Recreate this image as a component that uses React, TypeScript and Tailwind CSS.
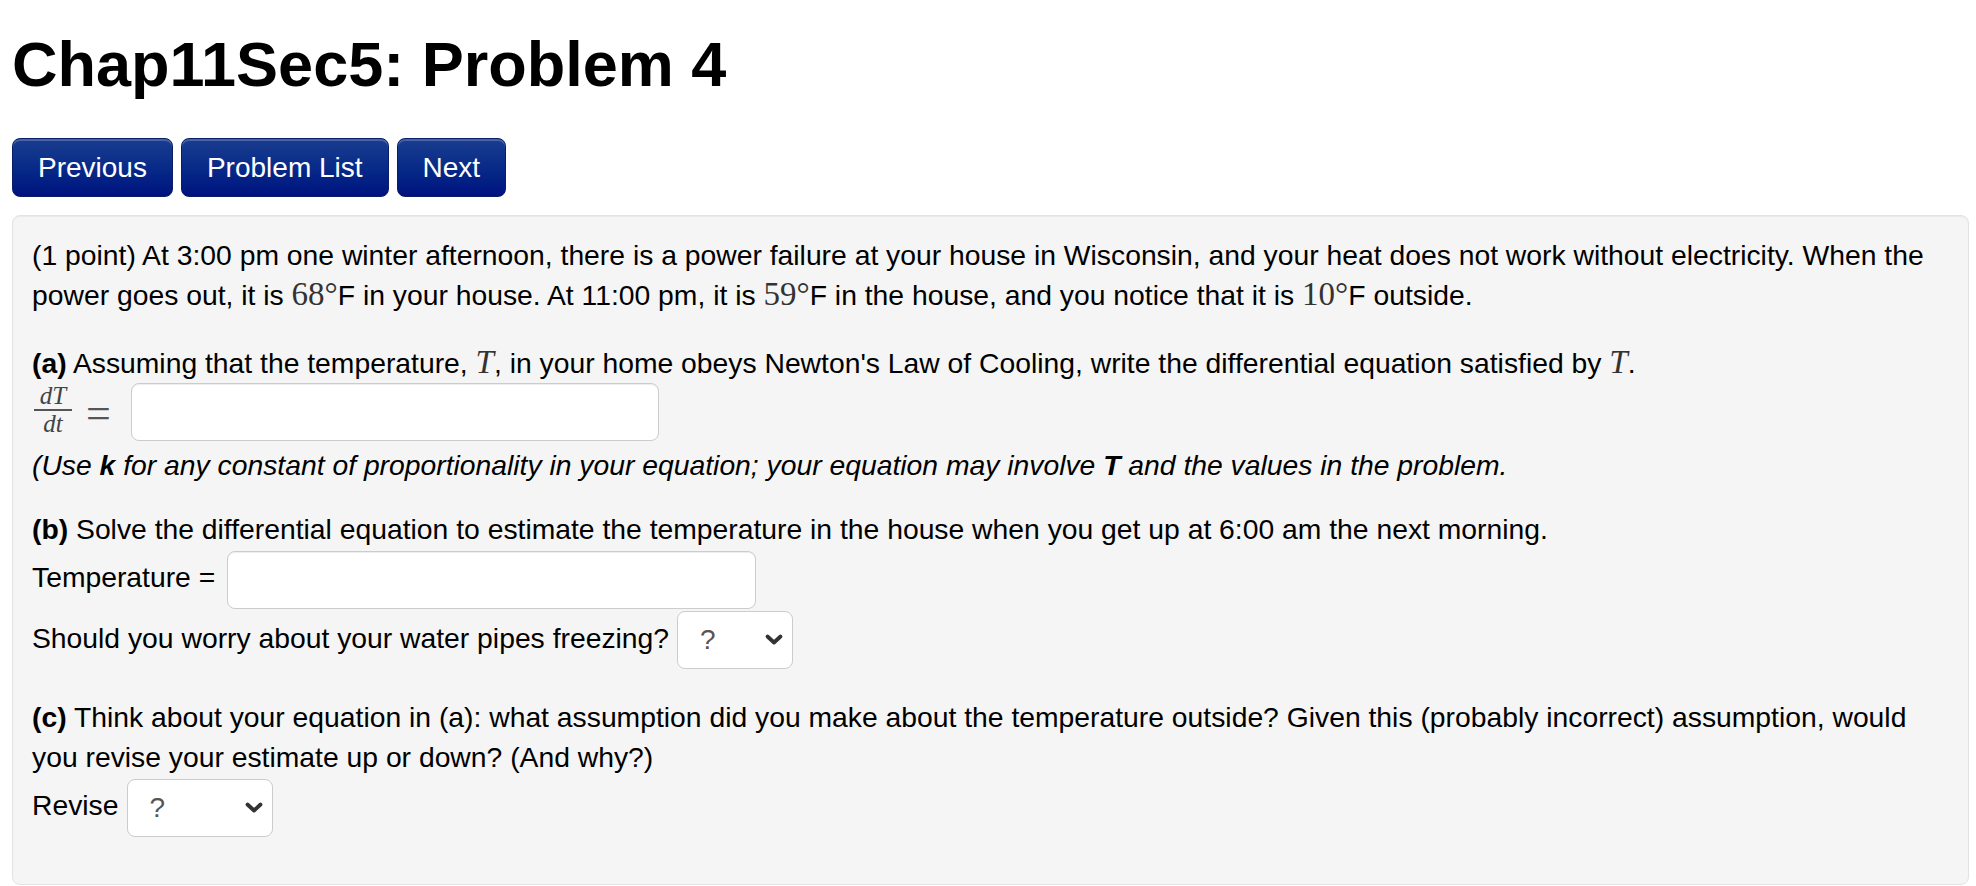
import React from 'react';

const sans = { fontFamily: '"Liberation Sans", Arial, Helvetica, sans-serif' };

function M({ children }: { children: React.ReactNode }) {
  return (
    <span className="font-['Liberation_Serif',serif] text-[33px] leading-none text-[#333]">{children}</span>
  );
}

function Deg({ n }: { n: string }) {
  return (
    <>
      <M>{n}°</M>F
    </>
  );
}

function TextBox({ width }: { width: string }) {
  return (
    <input
      type="text"
      className={`${width} h-[58px] rounded-[8px] border border-[#cccccc] bg-white px-3 text-[28px] shadow-[inset_0_1px_1px_rgba(0,0,0,0.075)] outline-none`}
    />
  );
}

function Pick({ width }: { width: string }) {
  return (
    <div className={`relative ${width} h-[58px]`}>
      <select className="h-full w-full appearance-none rounded-[8px] border border-[#cccccc] bg-white pl-[22px] text-[28px] text-[#555] outline-none">
        <option>?</option>
      </select>
      <svg
        className="pointer-events-none absolute right-[9px] top-[22px] h-[14px] w-[20px]"
        viewBox="0 0 20 14"
        fill="none"
        stroke="#333"
        strokeWidth="3.8"
        strokeLinecap="round"
        strokeLinejoin="round"
      >
        <path d="M3.5 3.5 L10 9.5 L16.5 3.5" />
      </svg>
    </div>
  );
}

export default function App() {
  return (
    <div className="min-h-[886px] bg-white pl-[12px] pr-[7px] text-black" style={sans}>
      <h1 className="pt-[29px] text-[63px] font-bold leading-[70px]">Chap11Sec5: Problem 4</h1>

      <div className="mt-[39px] flex gap-[8px]">
        {['Previous', 'Problem List', 'Next'].map((label) => (
          <button
            key={label}
            className="h-[59px] rounded-[8px] border border-[#0b1d66] bg-gradient-to-b from-[#1a3d90] to-[#00117f] px-[25px] text-[28px] text-white shadow-[inset_0_2px_0_rgba(255,255,255,0.2)]"
          >
            {label}
          </button>
        ))}
      </div>

      <div className="mt-[18px] rounded-[8px] border border-[#e3e3e3] bg-[#f5f5f5] px-[19px] pb-[45px] pt-[19px] text-[28.3px] leading-[40px] shadow-[inset_0_1px_1px_rgba(0,0,0,0.05)]">
        <p>
          (1 point) At 3:00 pm one winter afternoon, there is a power failure at your house in Wisconsin, and your heat does
          not work without electricity. When the power goes out, it is <Deg n="68" /> in your house. At 11:00 pm, it is{' '}
          <Deg n="59" /> in the house, and you notice that it is <Deg n="10" /> outside.
        </p>

        <p className="mt-[28px]">
          <b>(a)</b> Assuming that the temperature, <M><i>T</i></M>, in your home obeys Newton's Law of Cooling, write the
          differential equation satisfied by <M><i>T</i></M>.
        </p>
        <div className="flex h-[62px] items-start">
          <div className="ml-[2px] mt-[3px] flex w-[38px] flex-col items-center font-['Liberation_Serif',serif] text-[25px] italic leading-[20px] text-[#444]">
            <span>dT</span>
            <span className="my-[3px] h-[2px] w-[38px] bg-[#555]" />
            <span>dt</span>
          </div>
          <span className="ml-[14px] mr-[20px] mt-[9px] font-['Liberation_Serif',serif] text-[44px] leading-none text-[#555]">=</span>
          <TextBox width="w-[528px]" />
        </div>
        <p className="italic">
          (Use <b>k</b> for any constant of proportionality in your equation; your equation may involve <b>T</b> and the
          values in the problem.
        </p>

        <p className="mt-[24px]">
          <b>(b)</b> Solve the differential equation to estimate the temperature in the house when you get up at 6:00 am the
          next morning.
        </p>
        <div className="flex h-[61px] items-center gap-[12px]">
          <span className="pb-[6px]">Temperature =</span>
          <TextBox width="w-[529px]" />
        </div>
        <div className="flex h-[60px] items-center gap-[8px]">
          <span className="pb-[4px]">Should you worry about your water pipes freezing?</span>
          <Pick width="w-[116px]" />
        </div>

        <p className="mt-[27px]">
          <b>(c)</b> Think about your equation in (a): what assumption did you make about the temperature outside? Given this
          (probably incorrect) assumption, would you revise your estimate up or down? (And why?)
        </p>
        <div className="flex h-[62px] items-center gap-[8px]">
          <span className="pb-[6px]">Revise</span>
          <Pick width="w-[146px]" />
        </div>
      </div>
    </div>
  );
}
